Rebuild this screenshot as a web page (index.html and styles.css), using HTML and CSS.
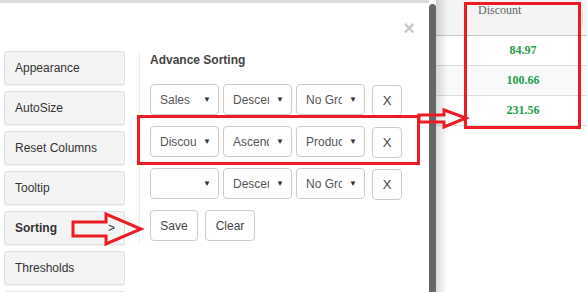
FILE: index.html
```html
<!DOCTYPE html>
<html lang="en">
<head>
    <meta charset="UTF-8">
    <title>Advance Sorting</title>
    <link rel="stylesheet" href="styles.css">
</head>
<body>

    <div class="page">
        <div class="modal">
            <span class="close">&times;</span>
            <div class="modal-body">
                <div class="tabs">
                    <div class="tab">Appearance</div>
                    <div class="tab">AutoSize</div>
                    <div class="tab">Reset Columns</div>
                    <div class="tab">Tooltip</div>
                    <div class="tab active">Sorting <span class="caret">&gt;</span></div>
                    <div class="tab">Thresholds</div>
                    <div class="tab"></div>
                </div>
                <div class="content">
                    <div class="title">Advance Sorting</div>

                    <div class="sort-row">
                        <div class="select"><span class="value">Sales</span><span class="arrow">&#9660;</span></div>
                        <div class="select"><span class="value">Descending</span><span class="arrow">&#9660;</span></div>
                        <div class="select"><span class="value">No Group</span><span class="arrow">&#9660;</span></div>
                        <div class="btn remove">X</div>
                    </div>
                    <div class="sort-row">
                        <div class="select"><span class="value">Discount</span><span class="arrow">&#9660;</span></div>
                        <div class="select"><span class="value">Ascending</span><span class="arrow">&#9660;</span></div>
                        <div class="select"><span class="value">Product</span><span class="arrow">&#9660;</span></div>
                        <div class="btn remove">X</div>
                    </div>
                    <div class="sort-row">
                        <div class="select"><span class="value"></span><span class="arrow">&#9660;</span></div>
                        <div class="select"><span class="value">Descending</span><span class="arrow">&#9660;</span></div>
                        <div class="select"><span class="value">No Group</span><span class="arrow">&#9660;</span></div>
                        <div class="btn remove">X</div>
                    </div>

                    <div class="actions">
                        <div class="btn save">Save</div>
                        <div class="btn clear">Clear</div>
                    </div>
                </div>
            </div>
        </div>

        <div class="scrollbar"></div>

        <div class="grid">
            <div class="grid-header">
                <div class="cell spacer"></div>
                <div class="cell discount head">Discount</div>
                <div class="cell divider"></div>
            </div>
            <div class="grid-row">
                <div class="cell spacer"></div>
                <div class="cell discount num">84.97</div>
            </div>
            <div class="grid-row alt">
                <div class="cell spacer"></div>
                <div class="cell discount num">100.66</div>
            </div>
            <div class="grid-row">
                <div class="cell spacer"></div>
                <div class="cell discount num">231.56</div>
            </div>
        </div>

        <!-- red call-outs drawn over the screenshot -->
        <svg class="notes" width="587" height="292" viewBox="0 0 587 292">
            <rect x="138.5" y="116.5" width="280" height="47" />
            <rect x="465.5" y="3.5" width="114" height="124" />
            <polygon points="73,222 106,222 106,214 141,229 106,244 106,236 73,236" />
            <polygon points="419,115 444,115 444,110 466,118 444,127 444,122 419,122" />
        </svg>
    </div>

</body>
</html>
```

FILE: styles.css
```css
body {
    margin: 0;
    font-family: 'Liberation Sans', Arial, sans-serif;
    font-size: 12px;
    color: #333;
    background-color: #fff;
}

.page {
    position: relative;
    display: flex;
    width: 587px;
    height: 292px;
    overflow: hidden;
}

.modal {
    position: relative;
    width: 429px;
    flex-shrink: 0;
    background-color: #fff;
    border-top: 3px solid #dcdcdc;
}

.close {
    position: absolute;
    top: 15px;
    right: 14px;
    font-size: 20px;
    font-weight: bold;
    color: #c8c8c8;
    line-height: 20px;
}

.modal-body {
    display: flex;
    padding-top: 48px;
}

.tabs {
    display: flex;
    flex-direction: column;
    gap: 6px;
    width: 121px;
    margin-left: 4px;
}

.tab {
    position: relative;
    height: 32px;
    line-height: 32px;
    padding-left: 10px;
    background-color: #f4f4f4;
    border: 1px solid #e0e0e0;
    border-radius: 3px;
    box-shadow: 0 1px 1px rgba(0, 0, 0, 0.06);
}

.tab.active {
    font-weight: bold;
}

.caret {
    position: absolute;
    left: 103px;
    font-weight: normal;
}

.content {
    margin-left: 14px;
    padding-left: 10px;
    height: 194px;
    border-left: 1px solid #ececec;
}

.title {
    height: 18px;
    line-height: 18px;
    font-weight: bold;
    color: #444;
}

.sort-row {
    display: flex;
    align-items: flex-start;
    gap: 4px;
    margin-top: 15px;
}

.sort-row + .sort-row {
    margin-top: 10px;
}

.select {
    display: flex;
    align-items: center;
    box-sizing: border-box;
    width: 69px;
    height: 31px;
    padding-left: 9px;
    border: 1px solid #ccc;
    border-radius: 4px;
    background-color: #fff;
    color: #555;
}

.value {
    width: 36px;
    overflow: hidden;
    white-space: nowrap;
}

.arrow {
    margin-left: auto;
    margin-right: 7px;
    font-size: 8px;
    color: #333;
}

.btn {
    display: flex;
    align-items: center;
    justify-content: center;
    box-sizing: border-box;
    height: 31px;
    border: 1px solid #ccc;
    border-radius: 4px;
    background-color: #fff;
    color: #444;
}

.remove {
    width: 30px;
    margin-left: 3px;
    margin-top: 1px;
    font-size: 13px;
}

.actions {
    display: flex;
    gap: 7px;
    margin-top: 10px;
}

.save {
    width: 48px;
}

.clear {
    width: 50px;
}

.scrollbar {
    width: 7px;
    flex-shrink: 0;
    margin-top: 4px;
    background-color: #666;
    border-radius: 4px 4px 0 0;
}

.grid {
    flex: 1;
    position: relative;
    font-family: 'Liberation Serif', 'Times New Roman', serif;
}

.grid::before {
    content: '';
    position: absolute;
    top: 0;
    left: 0;
    bottom: 0;
    width: 12px;
    background: linear-gradient(to right, rgba(0, 0, 0, 0.14), rgba(0, 0, 0, 0));
}

.grid-header {
    display: flex;
    height: 35px;
    background-color: #f3f4f4;
    border-bottom: 1px solid #c8c8c8;
}

.grid-row {
    display: flex;
    height: 29px;
    border-bottom: 1px solid #dcdcdc;
}

.grid-row.alt {
    background-color: #f7f9fb;
}

.cell.spacer {
    width: 28px;
}

.cell.discount {
    width: 118px;
}

.cell.head {
    box-sizing: border-box;
    padding: 3px 0 0 14px;
    color: #666;
    font-size: 12px;
}

.cell.divider {
    margin-top: 10px;
    height: 16px;
    border-left: 1px solid #ddd;
}

.cell.num {
    text-align: center;
    line-height: 29px;
    font-weight: bold;
    font-size: 12px;
    color: #1f9d48;
}

.notes {
    position: absolute;
    top: 0;
    left: 0;
    pointer-events: none;
}

.notes rect,
.notes polygon {
    fill: none;
    stroke: #ec1c24;
    stroke-width: 3;
}
```
